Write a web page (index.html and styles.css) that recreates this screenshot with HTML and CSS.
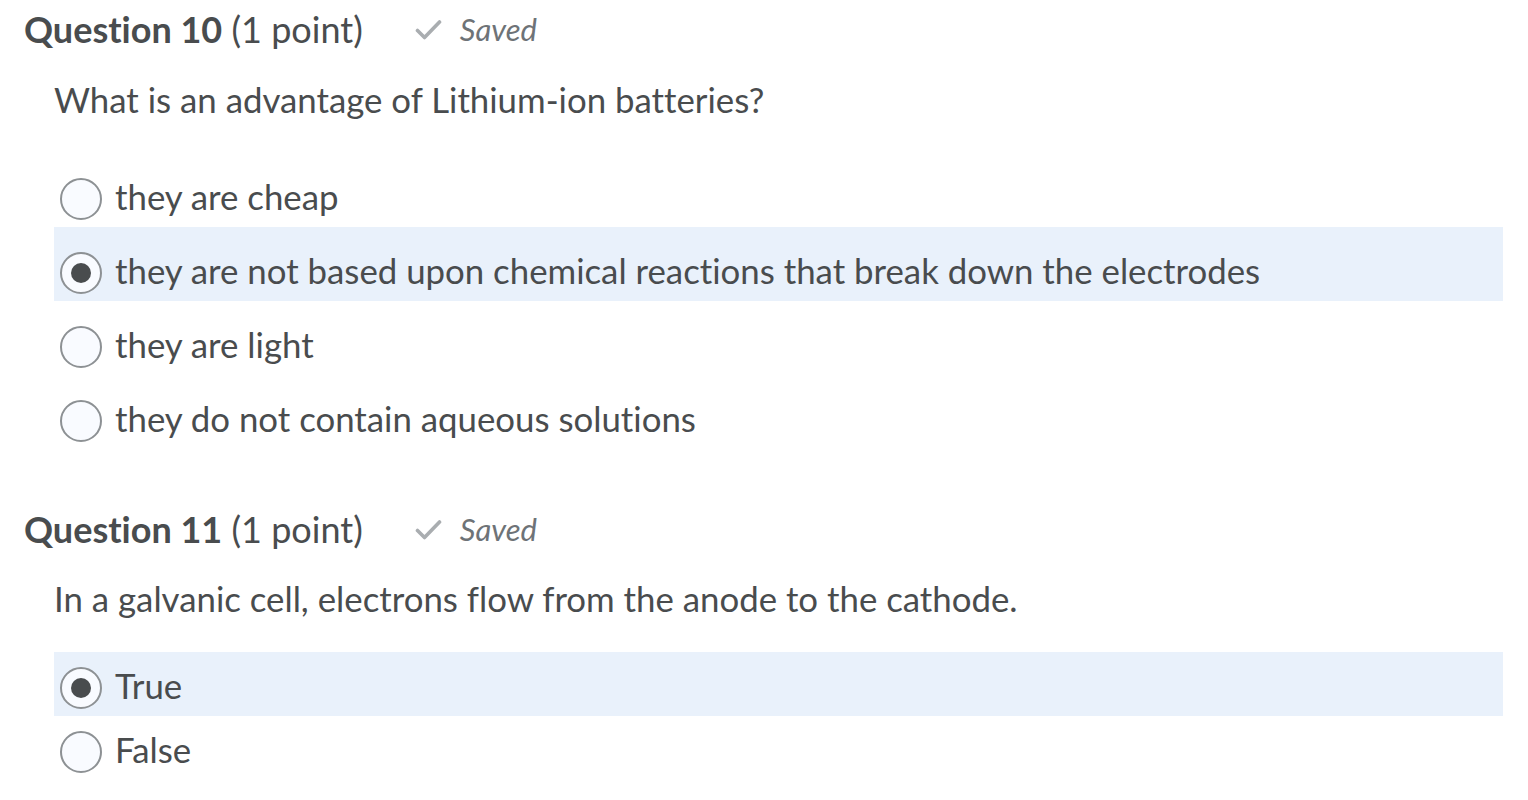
FILE: index.html
```html
<!DOCTYPE html>
<html>
<head>
<meta charset="utf-8">
<link rel="stylesheet" href="styles.css">
</head>
<body>
<section class="q q10">
  <div class="q-head">
    <h2 class="q-title"><strong>Question 10</strong> (1 point)</h2>
    <span class="saved">
      <svg class="check" width="27" height="21" viewBox="0 0 27 21"><path d="M2.5 11.5 L9.5 18.5 L24.5 3" fill="none" stroke="#a9adb0" stroke-width="3.6" stroke-linecap="round" stroke-linejoin="round"/></svg>
      <em>Saved</em>
    </span>
  </div>
  <p class="q-text">What is an advantage of Lithium-ion batteries?</p>
  <div class="options">
    <div class="opt"><span class="radio"></span><span class="label">they are cheap</span></div>
    <div class="opt sel"><span class="radio on"></span><span class="label">they are not based upon chemical reactions that break down the electrodes</span></div>
    <div class="opt"><span class="radio"></span><span class="label">they are light</span></div>
    <div class="opt"><span class="radio"></span><span class="label">they do not contain aqueous solutions</span></div>
  </div>
</section>
<section class="q q11">
  <div class="q-head">
    <h2 class="q-title"><strong>Question 11</strong> (1 point)</h2>
    <span class="saved">
      <svg class="check" width="27" height="21" viewBox="0 0 27 21"><path d="M2.5 11.5 L9.5 18.5 L24.5 3" fill="none" stroke="#a9adb0" stroke-width="3.6" stroke-linecap="round" stroke-linejoin="round"/></svg>
      <em>Saved</em>
    </span>
  </div>
  <p class="q-text">In a galvanic cell, electrons flow from the anode to the cathode.</p>
  <div class="options tf">
    <div class="opt sel"><span class="radio on"></span><span class="label">True</span></div>
    <div class="opt"><span class="radio"></span><span class="label">False</span></div>
  </div>
</section>
</body>
</html>
```

FILE: styles.css
```css
html, body {
  margin: 0;
  padding: 0;
  background: #ffffff;
}
body {
  font-family: Lato, "Open Sans", sans-serif;
  font-variant-ligatures: no-common-ligatures;
  color: #494c4e;
  width: 1528px;
}
.q {
  padding-left: 24px;
  padding-right: 25px;
}
.q10 {
  padding-top: 6px;
}
.q11 {
  padding-top: 57px;
}
.q-head {
  display: flex;
  align-items: center;
  height: 46px;
}
.q-title {
  margin: 0;
  font-size: 36px;
  font-weight: 400;
  line-height: 46px;
}
.q-title strong {
  font-weight: 700;
}
.saved {
  display: flex;
  align-items: center;
  margin-left: 52px;
  color: #6e7377;
  font-size: 31px;
}
.check {
  display: block;
  margin-right: 18px;
}
.saved em {
  font-style: italic;
}
.q-text {
  margin: 25px 0 0 30px;
  font-size: 34.8px;
  line-height: 46px;
  height: 46px;
}
.q11 .q-text {
  margin-top: 24px;
}
.options {
  margin: 30px 0 0 30px;
}
.opt {
  display: flex;
  align-items: center;
  height: 74px;
  box-sizing: border-box;
  padding: 18px 0 0 6px;
}
.tf .opt {
  height: 64px;
  padding-top: 8px;
}
.opt.sel {
  background: #e9f1fb;
}
.radio {
  width: 42px;
  height: 42px;
  box-sizing: border-box;
  border: 2px solid #8d9194;
  border-radius: 50%;
  background: #f9fbff;
  display: flex;
  align-items: center;
  justify-content: center;
  flex: none;
}
.radio.on::after {
  content: "";
  width: 20px;
  height: 20px;
  border-radius: 50%;
  background: #494c4e;
}
.label {
  margin: 0 0 4px 13px;
  font-size: 34.8px;
  line-height: 42px;
}
```
